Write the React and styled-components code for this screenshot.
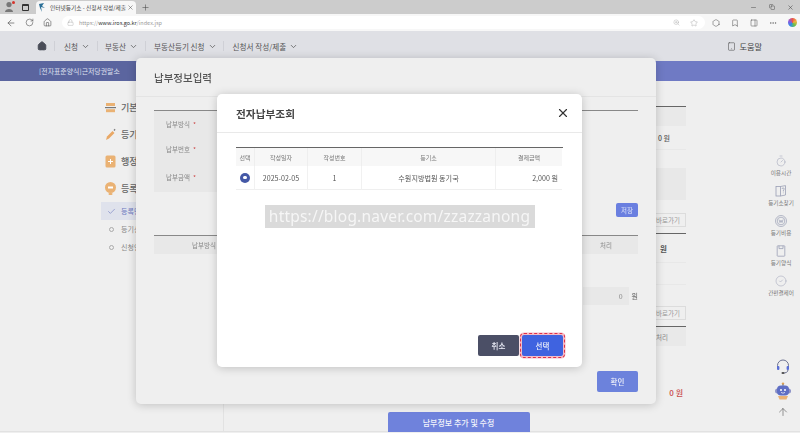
import React from 'react';
import styled, { createGlobalStyle } from 'styled-components';
import {
  ArrowLeft, RotateCw, Home, Lock, ZoomIn, Star, Hexagon, Bookmark, PanelRight, MoreHorizontal,
  X, Plus, Minus, Copy, ChevronDown, Timer, CircleCheck, ArrowUp, Check, Tablet,
} from 'lucide-react';

const Global = createGlobalStyle`
  html, body { margin: 0; padding: 0; background: #efefef; }
  * { box-sizing: border-box; }
  body { font-family: "Noto Sans CJK KR", "Noto Sans", sans-serif; }
`;
const Page = styled.div`
  position: relative; width: 800px; height: 433px; overflow: hidden;
  display: flex; flex-direction: column; background: #efefef; color: #555;
`;
const TabStrip = styled.div`
  height: 14px; background: #cccccc; display: flex; align-items: center; padding-left: 4px; flex: none;
`;
const Avatar = styled.div`
  position: relative; width: 10px; height: 12px; margin-right: 7.5px; display: flex; justify-content: center;
  svg { display: block; }
`;
const RedDot = styled.span`
  position: absolute; top: 0; right: -1px; width: 3px; height: 3px; border-radius: 50%; background: #d5342c;
`;
const WinBtn = styled.div`
  width: 7px; height: 7px; border: 1.2px solid #333; border-top-width: 2.2px; margin-right: 7.5px; border-radius: 1px;
`;
const Tab = styled.div`
  width: 100px; height: 13px; background: #f7f7f7; border-radius: 4px 4px 0 0; display: flex; align-items: center;
  padding: 0 2.5px 0 2px; gap: 4px; font-size: 5.7px; color: #444; white-space: nowrap; margin-top: 1px;
  svg { flex: none; }
`;
const TabTitle = styled.span`flex: 1; min-width: 0;`;
const NewTab = styled.div`margin-left: 5px; display: flex; color: #444;`;
const WinControls = styled.div`
  margin-left: auto; display: flex; gap: 12px; padding-right: 6px; color: #444;
`;
const AddressRow = styled.div`
  height: 17px; background: #f7f7f7; display: flex; align-items: center; padding-left: 6px; flex: none; color: #555;
`;
const NavIcons = styled.div`display: flex; gap: 9px; margin-right: 10px;`;
const Pill = styled.div`
  width: 643px; height: 13px; background: #fff; border-radius: 7px; display: flex; align-items: center;
  padding: 0 7px 0 5px; gap: 5px; font-size: 5.5px; color: #999;
`;
const Url = styled.span`flex: 1; b { color: #333; font-weight: 400; }`;
const PillTools = styled.div`display: flex; align-items: center; gap: 10px;`;
const BrowserTools = styled.div`display: flex; align-items: center; gap: 11px; margin-left: 7px;`;
const Copilot = styled.div`
  width: 9px; height: 9px; border-radius: 50%;
  background: conic-gradient(#e8554e, #f2b33d, #6cc04a, #2f8fe6, #8a5be0, #e8554e);
`;
const Header = styled.header`
  height: 30px; background: #dfe0e5; display: flex; align-items: center; padding: 0 38px 0 37px; flex: none;
  font-size: 7.6px; color: #555; white-space: nowrap;
`;
const HomeIcon = styled.div`display: flex; margin-right: 7px; color: #4a4d58;`;
const Crumb = styled.div`
  display: flex; align-items: center; gap: 3px; height: 10px; border-left: 1px solid #cfd0d6;
  padding: 0 ${p => p.$right}px 0 ${p => p.$left}px;
`;
const Help = styled.div`margin-left: auto; display: flex; align-items: center; gap: 3px; color: #444; font-size: 8.2px;`;
const Banner = styled.div`
  height: 20px; flex: none; background: linear-gradient(90deg, #5b659f 136px, #6f7ac4 136px);
  display: flex; align-items: center; padding-left: 39px; font-size: 6.9px; color: #dfe1ef;
`;
const Main = styled.div`
  flex: none; height: 351px; display: flex; border-bottom: 1px solid #e2e2e2;
`;
const LeftNav = styled.nav`
  width: 224px; flex: none; border-right: 1px solid #e2e2e2; padding: 13px 0 0 101px;
  display: flex; flex-direction: column;
`;
const NavGroup = styled.div`
  height: 27px; flex: none; display: flex; align-items: center; gap: 5px; padding-left: 4px; font-size: 9px; color: #666; font-weight: 500;
`;
const NavSub = styled.div`
  height: 18px; flex: none; display: flex; align-items: center; gap: 5px; padding-left: 6px; font-size: 7px;
  background: ${p => (p.$active ? '#dfe2ec' : 'transparent')}; color: ${p => (p.$active ? '#6d78c0' : '#888')};
`;
const Ring = styled.span`width: 5px; height: 5px; border: 1px solid #aaa; border-radius: 50%; margin: 0 2px;`;
const Content = styled.section`
  flex: 1; display: flex; flex-direction: column; padding: 25px 76px 0 7px; min-width: 0;
`;
const SummaryHead = styled.div`
  height: 20px; flex: none; border-top: 1px solid #666; background: #e9e9e9;
`;
const AmountRow = styled.div`
  height: ${p => p.$h}px; flex: none; display: flex; align-items: center; justify-content: flex-end;
  padding-right: ${p => p.$pr}px; border-bottom: 1px solid #e8e8e8;
  font-size: ${p => p.$size || 7}px; font-weight: ${p => p.$w || 500}; color: #555; border-top: ${p => (p.$line ? '1px solid #666' : 'none')};
`;
const GrayBox = styled.div`height: 32px; flex: none; margin-top: 18px; background: #e8e8e8;`;
const ShortcutBtn = styled.div`
  width: 90px; height: 14px; flex: none; align-self: flex-end; margin-top: ${p => p.$mt}px; border: 1px solid #dcdcdc;
  font-size: 6.5px; color: #999; display: flex; align-items: center; justify-content: flex-end; padding-right: 5px;
`;
const Spacer = styled.div`height: ${p => p.$h}px; flex: none;`;
const ProcessHead = styled.div`
  height: 20px; flex: none; margin-top: 6px; border-top: 1px solid #666; background: #e9e9e9;
  font-size: 6.5px; color: #888; display: flex; align-items: center; justify-content: flex-end; padding-right: 18px;
`;
const TotalRow = styled.div`
  height: 24px; flex: none; margin-top: 34px; display: flex; align-items: center; justify-content: flex-end;
  padding-right: 3px; font-size: 8px; color: #c94a4a; font-weight: 500;
`;
const SubmitBtn = styled.div`
  width: 142px; height: 20px; flex: none; align-self: center; margin-top: 8px; background: #6f82dc; color: #f3f4fb;
  border-radius: 2px 2px 0 0; font-size: 8px; font-weight: 500; display: flex; align-items: center; justify-content: center;
`;
const Rail = styled.aside`
  width: 38px; flex: none; display: flex; flex-direction: column; align-items: center; padding-top: 74px;
`;
const RailItem = styled.div`
  height: 30px; flex: none; display: flex; flex-direction: column; align-items: center; gap: 1.5px; font-size: 5.6px; color: #777;
  line-height: 8px; white-space: nowrap; svg { color: #9a9fb5; display: block; }
`;
const RailBottom = styled.div`
  margin-top: auto; padding: 0 0 13px 3px; display: flex; flex-direction: column; align-items: center; gap: 6.5px; color: #555;
  svg { display: block; }
`;
const Dialog = styled.div`
  position: absolute; display: flex; flex-direction: column; will-change: transform;
  left: ${p => p.$x}px; top: ${p => p.$y}px; width: ${p => p.$w}px; height: ${p => p.$h}px;
  background: ${p => p.$bg}; border-radius: 5px; box-shadow: 0 1px 10px rgba(0,0,0,.2);
`;
const OuterHead = styled.div`
  height: 39px; flex: none; padding: 12px 0 0 18px; font-size: 10.5px; color: #555; border-bottom: 1px solid #e4e4e4; font-weight: 500;
`;
const OuterBody = styled.div`
  flex: 1; padding: 13px 18px 12px; display: flex; flex-direction: column;
`;
const FormTable = styled.div`
  border-top: 1.5px solid #888; display: flex; flex-direction: column; flex: none; height: 82px;
`;
const FormRow = styled.div`
  height: ${p => p.$h}px; flex: none; display: flex;
`;
const FormLabel = styled.div`
  width: 63px; background: #e8e8e8; padding-left: 12px; display: flex; align-items: center; gap: 3px;
  font-size: 6.5px; color: #888;
  i { color: #c44; font-style: normal; }
`;
const SaveBtn = styled.div`
  width: 22px; height: 14px; align-self: flex-end; margin-top: 11px; background: #6a7fe0; border-radius: 2px;
  color: #dfe4fa; font-size: 6.5px; display: flex; align-items: center; justify-content: center;
`;
const PayHead = styled.div`
  margin-top: 18px; height: 19px; flex: none; border-top: 1.5px solid #888; background: #e8e8e8; display: flex; align-items: center;
  font-size: 6.5px; color: #888; padding: 0 26px 0 38px; justify-content: space-between;
`;
const SumRow = styled.div`
  margin-top: 33px; height: 18px; flex: none; display: flex; justify-content: flex-end; align-items: center; gap: 3px; font-size: 7px; color: #666;
`;
const SumInput = styled.div`
  width: 46px; height: 18px; background: #e8e8e8; display: flex; align-items: center; justify-content: flex-end; padding-right: 6px; color: #888;
`;
const BlueBtn = styled.button`
  width: 41px; height: 21px; border: 0; border-radius: 2px; padding: 0; font: inherit; font-size: 7.5px; font-weight: 500;
  background: ${p => p.$bg}; color: #eef0fa;
  outline: ${p => (p.$focus ? '1.5px dashed #e0304a' : 'none')}; outline-offset: 1px;
  box-shadow: ${p => (p.$focus ? '0 0 0 2.5px #f4bcc6' : 'none')};
`;
const ConfirmRow = styled.div`margin-top: auto; display: flex; justify-content: flex-end;`;
const InnerHead = styled.div`
  height: 39px; flex: none; display: flex; align-items: center; justify-content: space-between;
  padding: 0 12px 0 19px; border-bottom: 1px solid #e9e9e9; font-size: 10.7px; font-weight: 700; color: #444;
`;
const Close = styled.div`display: flex; color: #333;`;
const InnerBody = styled.div`
  flex: 1; display: flex; flex-direction: column; padding: 14px 19px 11px; min-height: 0;
`;
const Table = styled.div`
  border-top: 1.5px solid #666; display: grid; grid-template-columns: 18px 53px 54px 134px 67px; flex: none;
`;
const Th = styled.div`
  height: 18px; background: #f7f7f7; border-left: ${p => (p.$first ? 0 : '1px solid #eee')};
  display: flex; align-items: center; justify-content: center; font-size: 6px; color: #777; white-space: nowrap;
`;
const Td = styled.div`
  height: 24px; border-bottom: 1px solid #efefef; border-left: ${p => (p.$first ? 0 : '1px solid #f1f1f1')};
  display: flex; align-items: center; justify-content: ${p => p.$end ? 'flex-end' : 'center'}; font-size: 7.1px; color: #555;
  padding-right: ${p => p.$end ? '4px' : 0}; white-space: nowrap;
`;
const Radio = styled.span`
  width: 10px; height: 10px; border-radius: 50%; background: #4458a6; display: flex; align-items: center; justify-content: center;
  &::after { content: ''; width: 3.5px; height: 3.5px; border-radius: 50%; background: #fff; }
`;
const Watermark = styled.div`
  align-self: center; width: 270px; height: 23px; margin-top: 15px; background: #dadada; color: rgba(255,255,255,.75);
  font-family: "Noto Sans", sans-serif; font-size: 15.5px; line-height: 23px; text-align: center; white-space: nowrap; letter-spacing: .2px;
`;
const InnerActions = styled.div`margin-top: auto; display: flex; justify-content: flex-end; gap: 3px;`;

const I = ({ as: C, s = 8, w = 1.6 }) => <C size={s} strokeWidth={w} />;

const Pencil = () => (
  <svg width="11" height="13" viewBox="0 0 11 13"><path d="M1 12 L2 8.5 L7.5 3 L9.5 5 L4 10.5 Z" fill="#e9a866" /><path d="M8.5 2 L9.7 .8 L10.5 1.8 L9.5 3Z" fill="#777" /></svg>
);
const Drawer = () => (
  <svg width="11" height="11" viewBox="0 0 11 11"><rect x="1" y="1" width="9" height="3" fill="#eab274" /><rect x="0" y="5" width="11" height="1.2" fill="#777" /><rect x="1" y="7.2" width="9" height="3" fill="#eab274" /></svg>
);
const Sheet = () => (
  <svg width="11" height="14" viewBox="0 0 11 14"><rect x=".5" y=".5" width="10" height="12" rx="1.5" fill="#eab274" /><path d="M5.5 4 V9 M3 6.5 H8" stroke="#fff" strokeWidth="1" /></svg>
);
const Bulb = () => (
  <svg width="11" height="13" viewBox="0 0 11 13"><circle cx="5.5" cy="5.5" r="5.5" fill="#eab274" /><rect x="3" y="4.5" width="5" height="2" fill="#fff" /><rect x="3.5" y="11" width="4" height="2" rx="1" fill="#eab274" /></svg>
);
const Favicon = () => (
  <svg width="8" height="9" viewBox="0 0 8 9"><path d="M1 1 L6 0 L4 3 L7 5 L3 4 L4 9 L2 5Z" fill="#2a6f97" /></svg>
);
const UserIcon = () => (
  <svg width="8" height="11" viewBox="0 0 8 11"><circle cx="4" cy="3.6" r="2.6" fill="#777" /><path d="M0 11 C0 7 8 7 8 11Z" fill="#777" /></svg>
);
const Headset = () => (
  <svg width="14" height="16" viewBox="0 0 14 16" fill="none"><path d="M1.5 8 V6.5 a5.5 5.5 0 0 1 11 0 V8" stroke="#6c7190" strokeWidth="1" /><rect x="1" y="7" width="2.4" height="4" rx="1" fill="#5a6fd6" /><rect x="10.6" y="7" width="2.4" height="4" rx="1" fill="#5a6fd6" /><path d="M12 11 C12 13.5 9 14 7.5 14" stroke="#6c7190" strokeWidth="1" /><rect x="5.5" y="13" width="3" height="2" rx="1" fill="#555" /></svg>
);
const Robot = () => (
  <svg width="16" height="18" viewBox="0 0 16 18"><circle cx="8" cy="1.6" r="1.2" fill="#e0a050" /><rect x="7.5" y="2" width="1" height="2" fill="#777" /><rect x="0" y="6.5" width="16" height="5" rx="2.5" fill="#8c92c8" /><rect x="2" y="3.5" width="12" height="10" rx="4" fill="#5f6fc4" /><circle cx="6" cy="8" r="1" fill="#fff" /><circle cx="10" cy="8" r="1" fill="#fff" /><path d="M6 10.4 Q8 12 10 10.4" stroke="#fff" strokeWidth=".7" fill="none" /><path d="M3 14 H13 L11.5 17.5 H4.5Z" fill="#eab274" /></svg>
);
const FinderIcon = () => (
  <svg width="12" height="12" viewBox="0 0 12 12" fill="none" stroke="currentColor" strokeWidth=".8"><rect x="1" y="1.5" width="4.5" height="9.5" /><path d="M5.5 1.5 L10.5 .6 V10 L5.5 11" /><path d="M7 4 a1.1 1.1 0 1 1 1.4 1.1 V6.4 M8.4 7.6 V8.2" /></svg>
);
const FeeIcon = () => (
  <svg width="12" height="12" viewBox="0 0 12 12" fill="none" stroke="currentColor"><circle cx="6" cy="6" r="5.5" strokeWidth=".7" /><circle cx="6" cy="6" r="3.8" strokeWidth=".7" /><path d="M4 4.6 L5 7.6 L6 5.2 L7 7.6 L8 4.6" strokeWidth=".7" /></svg>
);
const FormIcon = () => (
  <svg width="12" height="12" viewBox="0 0 12 12" fill="none" stroke="currentColor" strokeWidth=".8"><rect x="2.2" y=".8" width="7.6" height="10.4" rx=".6" /><path d="M4 .8 V3.6 H8 V.8" /></svg>
);

export default function App() {
  return (
    <Page>
      <Global />
      <TabStrip>
        <Avatar><UserIcon /><RedDot /></Avatar>
        <WinBtn />
        <Tab><Favicon /><TabTitle>인터넷등기소 - 신청서 작성/제출</TabTitle><X size={7} strokeWidth={1.6} /></Tab>
        <NewTab><Plus size={9} strokeWidth={1.4} /></NewTab>
        <WinControls><Minus size={7} strokeWidth={1.6} /><Copy size={6} strokeWidth={1.8} /><X size={7} strokeWidth={1.8} /></WinControls>
      </TabStrip>
      <AddressRow>
        <NavIcons><I as={ArrowLeft} s={10} /><I as={RotateCw} s={9} /><I as={Home} s={9} /></NavIcons>
        <Pill>
          <I as={Lock} s={7} w={1.2} />
          <Url>https://<b>www.iros.go.kr</b>/index.jsp</Url>
          <PillTools><I as={ZoomIn} s={7} w={1.2} /><I as={Star} s={8} w={1.2} /></PillTools>
        </Pill>
        <BrowserTools>
          <I as={Hexagon} s={8} /><I as={Bookmark} s={8} /><I as={PanelRight} s={8} /><I as={MoreHorizontal} s={8} /><Copilot />
        </BrowserTools>
      </AddressRow>
      <Header>
        <HomeIcon><Home size={10} strokeWidth={2.4} fill="#4a4d58" /></HomeIcon>
        <Crumb $left={9} $right={7}>신청 <ChevronDown size={9} /></Crumb>
        <Crumb $left={7} $right={7}>부동산 <ChevronDown size={9} /></Crumb>
        <Crumb $left={8} $right={6}>부동산등기 신청 <ChevronDown size={9} /></Crumb>
        <Crumb $left={9} $right={6}>신청서 작성/제출 <ChevronDown size={9} /></Crumb>
        <Help><Tablet size={9} strokeWidth={1.4} /> 도움말</Help>
      </Header>
      <Banner>[전자표준양식]근저당권말소</Banner>
      <Main>
        <LeftNav>
          <NavGroup><Drawer />기본정보</NavGroup>
          <NavGroup><Pencil />등기할사항</NavGroup>
          <NavGroup><Sheet />행정정보</NavGroup>
          <NavGroup><Bulb />등록면허세</NavGroup>
          <NavSub $active><Check size={9} strokeWidth={1.6} />등록면허세</NavSub>
          <NavSub><Ring />등기신청수수료</NavSub>
          <NavSub><Ring />신청인</NavSub>
        </LeftNav>
        <Content>
          <SummaryHead />
          <AmountRow $h={24} $pr={16}>0 원</AmountRow>
          <GrayBox />
          <ShortcutBtn $mt={13}>바로가기</ShortcutBtn>
          <Spacer $h={6} />
          <AmountRow $h={30} $pr={19} $size={7.5} $line $w={700}>원</AmountRow>
          <AmountRow $h={22} $pr={20} />
          <ShortcutBtn $mt={21}>바로가기</ShortcutBtn>
          <ProcessHead>처리</ProcessHead>
          <TotalRow>0 원</TotalRow>
          <SubmitBtn>납부정보 추가 및 수정</SubmitBtn>
        </Content>
        <Rail>
          <RailItem><Timer size={12} strokeWidth={1} />이용시간</RailItem>
          <RailItem><FinderIcon />등기소찾기</RailItem>
          <RailItem><FeeIcon />등기비용</RailItem>
          <RailItem><FormIcon />등기양식</RailItem>
          <RailItem><CircleCheck size={12} strokeWidth={1} />간편결제어</RailItem>
          <RailBottom>
            <Headset />
            <Robot />
            <ArrowUp size={12} strokeWidth={1.2} />
          </RailBottom>
        </Rail>
      </Main>

      <Dialog $x={136} $y={58} $w={520} $h={346} $bg="#efefef">
        <OuterHead>납부정보입력</OuterHead>
        <OuterBody>
          <FormTable>
            <FormRow $h={26}><FormLabel>납부방식 <i>*</i></FormLabel></FormRow>
            <FormRow $h={24}><FormLabel>납부번호 <i>*</i></FormLabel></FormRow>
            <FormRow $h={31}><FormLabel>납부금액 <i>*</i></FormLabel></FormRow>
          </FormTable>
          <SaveBtn>저장</SaveBtn>
          <PayHead><span>납부방식</span><span>처리</span></PayHead>
          <SumRow><SumInput>0</SumInput>원</SumRow>
          <ConfirmRow><BlueBtn $bg="#6c82dc">확인</BlueBtn></ConfirmRow>
        </OuterBody>
      </Dialog>

      <Dialog $x={217} $y={94} $w={365} $h={273} $bg="#ffffff">
        <InnerHead>전자납부조회<Close><X size={14} strokeWidth={2} /></Close></InnerHead>
        <InnerBody>
          <Table>
            <Th $first>선택</Th><Th>작성일자</Th><Th>작성번호</Th><Th>등기소</Th><Th>결제금액</Th>
            <Td $first><Radio /></Td><Td>2025-02-05</Td><Td>1</Td><Td>수원지방법원 동기국</Td><Td $end>2,000 원</Td>
          </Table>
          <Watermark>https://blog.naver.com/zzazzanong</Watermark>
          <InnerActions>
            <BlueBtn $bg="#4b4f66">취소</BlueBtn>
            <BlueBtn $bg="#3f63e0" $focus>선택</BlueBtn>
          </InnerActions>
        </InnerBody>
      </Dialog>
    </Page>
  );
}
